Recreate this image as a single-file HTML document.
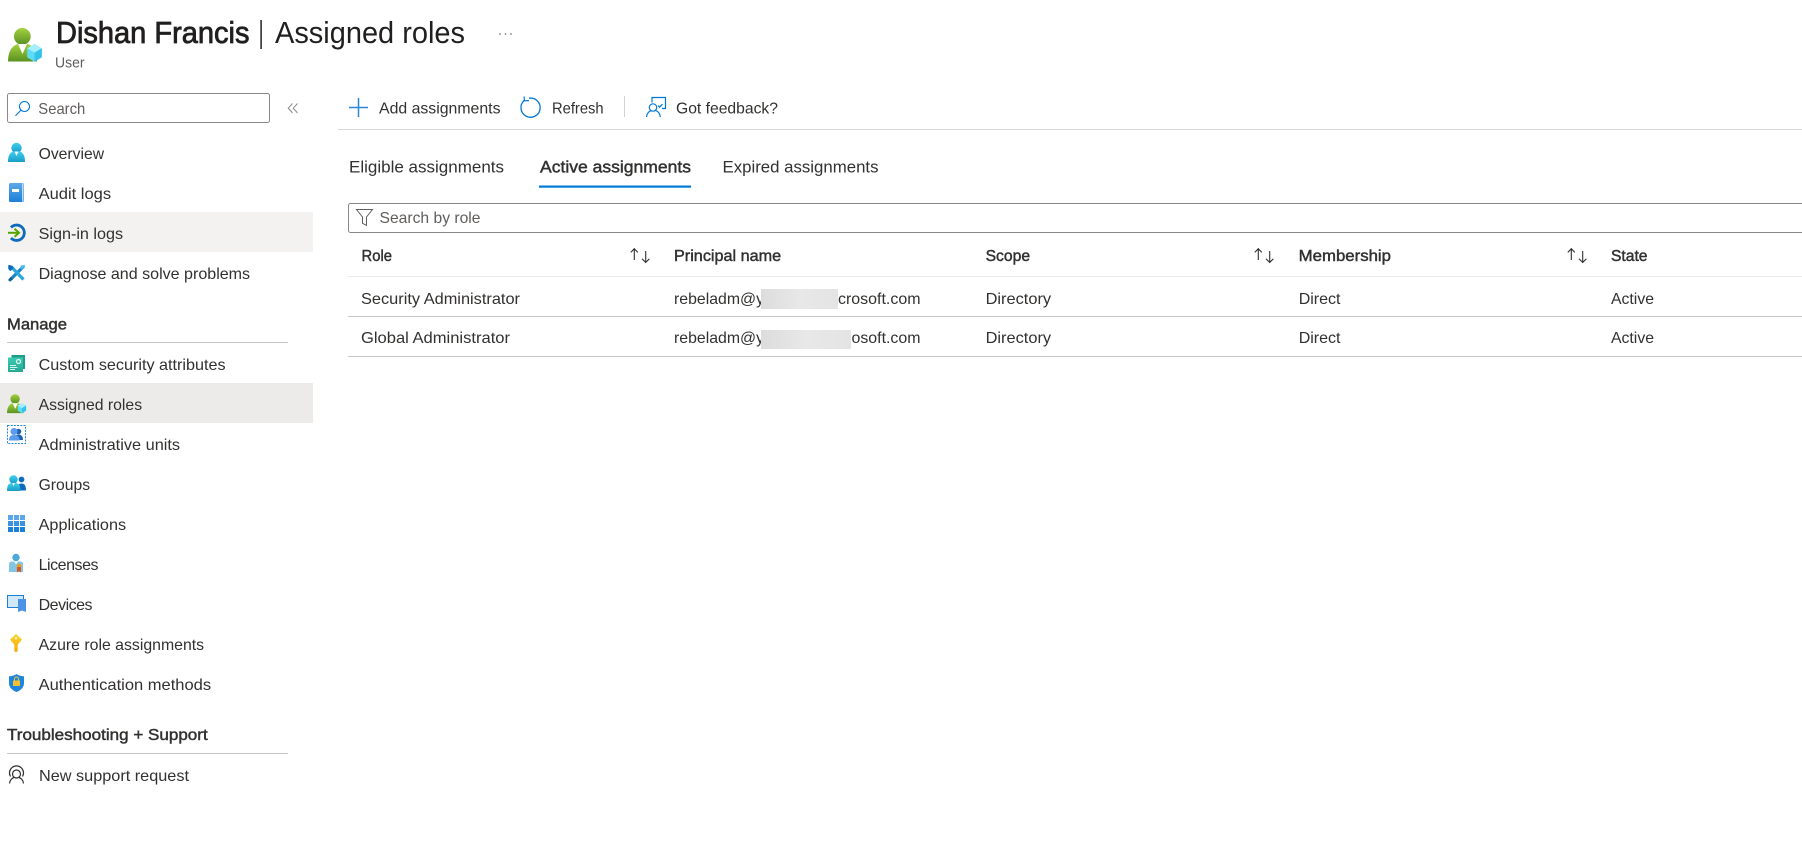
<!DOCTYPE html>
<html lang="en">
<head>
<meta charset="utf-8">
<title>Dishan Francis | Assigned roles</title>
<style>
html,body{margin:0;padding:0;background:#fff;width:1802px;height:865px;overflow:hidden}
svg{display:block;position:absolute;left:0;top:0}
text{font-family:"Liberation Sans",Arial,sans-serif;font-size:16px;fill:#323130}
.semi{stroke:#323130;stroke-width:.45px}
.grey{fill:#605e5c}
</style>
</head>
<body>
<svg width="1802" height="865" viewBox="0 0 1802 865" xmlns="http://www.w3.org/2000/svg">
<defs>
<linearGradient id="gGreen" x1="0" y1="0" x2="0" y2="1"><stop offset="0" stop-color="#a4d13f"/><stop offset="1" stop-color="#5a9222"/></linearGradient>
<linearGradient id="gCyan" x1="0" y1="0" x2="0" y2="1"><stop offset="0" stop-color="#3fd0ee"/><stop offset="1" stop-color="#1a9cc6"/></linearGradient>
<linearGradient id="gBlue" x1="0" y1="0" x2="0" y2="1"><stop offset="0" stop-color="#5ea8ea"/><stop offset="1" stop-color="#1c7fd6"/></linearGradient>
<linearGradient id="gTeal" x1="0" y1="0" x2="0" y2="1"><stop offset="0" stop-color="#3ccbb2"/><stop offset="1" stop-color="#25a893"/></linearGradient>
<linearGradient id="gKey" x1="0" y1="0" x2="0" y2="1"><stop offset="0" stop-color="#ffd230"/><stop offset="1" stop-color="#f5a800"/></linearGradient>
<linearGradient id="gBlur" x1="0" y1="0" x2="1" y2="0"><stop offset="0" stop-color="#dcdcdc"/><stop offset=".5" stop-color="#e8e8e8"/><stop offset="1" stop-color="#e4e4e4"/></linearGradient>
<g id="rolesIcon">
  <circle cx="22.300" cy="36.400" r="8.400" fill="url(#gGreen)"/>
  <path d="M8 61.500c0-9 3-15 9.500-17.500h10C34 46 37 52 37 61.500z" fill="url(#gGreen)"/>
  <path d="M18 44h9l-4.500 10z" fill="#fff"/>
  <path d="M34.500 44l7.300 4.300v9L34.500 61.700l-7.300-4.400v-9z" fill="#5fdcf5"/>
  <path d="M34.500 44l7.300 4.300-7.300 4.300-7.300-4.300z" fill="#a6eefb"/>
  <path d="M34.500 52.600l7.300-4.300v9L34.500 61.700z" fill="#34c3e8"/>
</g>
<g id="sort" fill="none" stroke="#323130" stroke-width="1.100">
  <path d="M634.300 249v11M630.800 252.400l3.500-3.700 3.500 3.700"/>
  <path d="M645.700 251v11.500M642 258.700l3.700 3.800 3.700-3.800"/>
</g>
</defs>

<!-- header -->
<use href="#rolesIcon"/>
<text x="56" y="43" style="font-size:31px;fill:#201f1e;stroke:#201f1e;stroke-width:.8px" textLength="193.500" lengthAdjust="spacingAndGlyphs">Dishan Francis</text>
<rect x="260.300" y="20" width="1.600" height="29" fill="#323130"/>
<text x="275" y="43" style="font-size:31px;fill:#201f1e" textLength="190" lengthAdjust="spacingAndGlyphs">Assigned roles</text>
<circle cx="500" cy="34" r=".8" fill="#605e5c"/><circle cx="505.500" cy="34" r=".8" fill="#605e5c"/><circle cx="511" cy="34" r=".8" fill="#605e5c"/>
<text x="55" y="67.500" class="grey" style="font-size:15px" textLength="29.500" lengthAdjust="spacingAndGlyphs">User</text>

<!-- sidebar search -->
<rect x="7.500" y="93.500" width="262" height="29" rx="2" fill="#fff" stroke="#8a8886"/>
<circle cx="24.500" cy="106.500" r="5" fill="none" stroke="#0078d4" stroke-width="1.100"/>
<path d="M20.800 110.200l-5.300 5.600" fill="none" stroke="#0078d4" stroke-width="1.100"/>
<text x="38.300" y="113.800" class="grey" textLength="47" lengthAdjust="spacingAndGlyphs">Search</text>
<path d="M292.500 103.500l-4.300 4.700 4.300 4.700M297.500 103.500l-4.300 4.700 4.300 4.700" fill="none" stroke="#8a8886" stroke-width="1"/>

<!-- selection backgrounds -->
<rect x="0" y="212" width="313" height="40" fill="#f3f2f1"/>
<rect x="0" y="383" width="313" height="40" fill="#edebe9"/>

<!-- nav text -->
<text x="38.600" y="159" textLength="65.500" lengthAdjust="spacingAndGlyphs">Overview</text>
<text x="38.600" y="199" textLength="72.500" lengthAdjust="spacingAndGlyphs">Audit logs</text>
<text x="38.600" y="239" textLength="84.500" lengthAdjust="spacingAndGlyphs">Sign-in logs</text>
<text x="38.600" y="279" textLength="211.500" lengthAdjust="spacingAndGlyphs">Diagnose and solve problems</text>
<text x="7" y="329.300" class="semi" textLength="60" lengthAdjust="spacingAndGlyphs">Manage</text>
<rect x="7" y="342" width="281" height="1" fill="#c8c6c4"/>
<text x="38.600" y="370" textLength="187" lengthAdjust="spacingAndGlyphs">Custom security attributes</text>
<text x="38.600" y="410" textLength="103.500" lengthAdjust="spacingAndGlyphs">Assigned roles</text>
<text x="38.600" y="450" textLength="141.500" lengthAdjust="spacingAndGlyphs">Administrative units</text>
<text x="38.600" y="490" textLength="51.500" lengthAdjust="spacingAndGlyphs">Groups</text>
<text x="38.600" y="530" textLength="87.500" lengthAdjust="spacingAndGlyphs">Applications</text>
<text x="38.600" y="570" style="letter-spacing:-.46px">Licenses</text>
<text x="38.600" y="610" style="letter-spacing:-.49px">Devices</text>
<text x="38.600" y="650" textLength="165.500" lengthAdjust="spacingAndGlyphs">Azure role assignments</text>
<text x="38.600" y="690" textLength="172.500" lengthAdjust="spacingAndGlyphs">Authentication methods</text>
<text x="7" y="740" class="semi" textLength="200.700" lengthAdjust="spacingAndGlyphs">Troubleshooting + Support</text>
<rect x="7" y="753" width="281" height="1" fill="#c8c6c4"/>
<text x="39" y="781" textLength="150" lengthAdjust="spacingAndGlyphs">New support request</text>

<!-- overview person -->
<circle cx="16.500" cy="148" r="5.200" fill="url(#gCyan)"/>
<path d="M8 162c0-6 1.500-9 5-10.500h7c3.500 1.500 5 4.500 5 10.500z" fill="url(#gCyan)"/>
<path d="M14.500 151.500h4l-2 4.500z" fill="#fff"/>
<!-- audit book -->
<rect x="9" y="183" width="15" height="19" rx="1.500" fill="url(#gBlue)"/>
<rect x="22" y="183.500" width="1.500" height="18" fill="#b9dcf7"/>
<rect x="12" y="189" width="7" height="3" fill="#fff"/>
<!-- sign-in -->
<path d="M11 227.500A7.700 7.700 0 1 1 11 238" fill="none" stroke="#0f6cbd" stroke-width="2.800"/>
<path d="M8 232.800h10.500" stroke="#57a300" stroke-width="2" fill="none"/>
<path d="M14.500 228.800l4.500 4-4.500 4" stroke="#57a300" stroke-width="2" fill="none"/>
<!-- diagnose -->
<path d="M10.500 279.500L23 267" stroke="#1a86c8" stroke-width="3.200" fill="none"/>
<path d="M11 266.500l12.500 13" stroke="#2aa7dd" stroke-width="3.200" fill="none"/>
<path d="M8.500 265c2.500 0 4.500 1 5 3l-2.800 3c-2-.500-3.200-2.500-2.200-6z" fill="#0f6cbd"/>
<path d="M21 265.500l4-.500-.500 3.500-3 1-1.500-1.500z" fill="#45b6e8"/>
<path d="M8 280l2.800-3.300 2.200 2.200-2.800 2.800z" fill="#0f5f96"/>
<!-- custom sec attrs -->
<rect x="11.500" y="355" width="13.500" height="14" fill="#1d9d8a"/>
<rect x="8" y="357.500" width="15" height="14.500" fill="url(#gTeal)"/>
<path d="M10 365.500h6M10 367.500h7.500M10 369.500h5" stroke="#d5f4ee" stroke-width="1" fill="none"/>
<circle cx="18.500" cy="361.500" r="2" fill="none" stroke="#e4faf6" stroke-width="1.200"/>
<!-- assigned roles -->
<use href="#rolesIcon" transform="translate(2.500 378.400) scale(.564)"/>
<!-- administrative units -->
<rect x="7.500" y="425.500" width="18" height="18" fill="none" stroke="#2b88d8" stroke-dasharray="2 1.200"/>
<circle cx="18.500" cy="431.500" r="2.800" fill="#1f5fb5"/>
<path d="M14 440c0-3.500 1.500-5.500 4.500-5.500s4.500 2 4.500 5.500z" fill="#1f5fb5"/>
<circle cx="14" cy="431.500" r="3.500" fill="#5a9bea"/>
<path d="M9 440.500c0-4 1.500-5.500 5-5.500s5.500 1.500 5.500 5.500z" fill="#5a9bea"/>
<!-- groups -->
<circle cx="21.500" cy="479.500" r="2.900" fill="#0f6cbd"/>
<path d="M17 490.500c0-5 1.500-7 4.500-7s4.500 2 4.500 7z" fill="#0f6cbd"/>
<circle cx="13.500" cy="479.500" r="4.200" fill="url(#gCyan)"/>
<path d="M7 491c0-5.500 1.500-7.500 4.500-8h4.500c3 .500 4.500 2.500 4.500 8z" fill="url(#gCyan)"/>
<path d="M12.300 483h2.500l-1.200 3z" fill="#fff"/>
<!-- applications -->
<g>
<rect x="8" y="515" width="5" height="5" fill="#5ba5ea"/><rect x="14" y="515" width="5" height="5" fill="#5ba5ea"/><rect x="20" y="515" width="5" height="5" fill="#5ba5ea"/>
<rect x="8" y="521" width="5" height="5" fill="#3b92e3"/><rect x="14" y="521" width="5" height="5" fill="#3b92e3"/><rect x="20" y="521" width="5" height="5" fill="#3b92e3"/>
<rect x="8" y="527" width="5" height="5" fill="#1b81d8"/><rect x="14" y="527" width="5" height="5" fill="#1b81d8"/><rect x="20" y="527" width="5" height="5" fill="#1b81d8"/>
</g>
<!-- licenses -->
<circle cx="16" cy="557.500" r="3.700" fill="#4fa8d8"/>
<path d="M9 572v-7.500c0-2 1-3 3-3h8c2 0 3 1 3 3v7.500z" fill="#82c6e6"/>
<path d="M14 561.500h4l-2 3z" fill="#fff"/>
<circle cx="19" cy="566" r="2.300" fill="#f09a1a"/>
<path d="M17 567h4v5.500l-2-1.500-2 1.500z" fill="#d9541e"/>
<!-- devices -->
<rect x="7.500" y="595.500" width="16" height="12" fill="#cfe8fa" stroke="#1b7fd6"/>
<path d="M18 599h8v13l-4-1.500-4 1.500z" fill="#4c93e6"/>
<!-- key -->
<path d="M16 634l6 5.500-4.300 5.300v6l-1.700 1.700-1.700-1.700v-6L10 639.500z" fill="url(#gKey)"/>
<circle cx="16" cy="638.300" r="1.300" fill="#fff3bf"/>
<!-- shield -->
<path d="M16.500 674c2 1.500 4.500 2.200 7.500 2.200v7c0 4-3 7-7.500 8.800-4.500-1.800-7.500-4.800-7.500-8.800v-7c3 0 5.500-.700 7.500-2.200z" fill="#1f86dd"/>
<rect x="13" y="680.500" width="7" height="5.500" rx=".6" fill="#f5c12e"/>
<path d="M14.500 680.500v-1.500a2 2 0 0 1 4 0v1.500" fill="none" stroke="#f5c12e" stroke-width="1"/>
<!-- support -->
<g fill="none" stroke="#323130" stroke-width="1.200">
<circle cx="16.500" cy="774" r="4"/>
<path d="M10.500 776.500a7 7 0 1 1 12 0"/>
<path d="M9.500 783.500c.300-3.500 2.700-5.500 4.500-6M23.500 783.500c-.300-3.500-2.700-5.500-4.500-6"/>
</g>

<!-- toolbar -->
<path d="M358.500 98v19M349 107.500h19" stroke="#2b88d8" stroke-width="1.500" fill="none"/>
<text x="379" y="113.700" textLength="121.500" lengthAdjust="spacingAndGlyphs">Add assignments</text>
<path d="M529 98.200A9.600 9.600 0 1 1 524.300 100.400" fill="none" stroke="#0078d4" stroke-width="1.300"/>
<path d="M524 96.500l.500 4.300 4.500-.200" fill="none" stroke="#0078d4" stroke-width="1.200"/>
<text x="552" y="113.700" textLength="51.600" lengthAdjust="spacingAndGlyphs">Refresh</text>
<rect x="624" y="96" width="1" height="21" fill="#d2d0ce"/>
<g fill="none" stroke="#0078d4" stroke-width="1.200">
<path d="M652 102.500v-5h13.500v11h-3.500"/>
<path d="M658.200 105.500l1.300 1.700 3-3"/>
<circle cx="653" cy="107.500" r="3.700"/>
<path d="M646.500 117c.300-3.500 2.500-6 5-6.300M660.300 117c-.300-3.500-2.300-6-4.800-6.300"/>
</g>
<text x="676" y="113.700" textLength="102" lengthAdjust="spacingAndGlyphs">Got feedback?</text>
<rect x="338" y="129" width="1464" height="1" fill="#d6d6d6"/>

<!-- tabs -->
<text x="349" y="172.700" style="font-size:17px" textLength="155" lengthAdjust="spacingAndGlyphs">Eligible assignments</text>
<text x="540" y="172.700" class="semi" style="font-size:17px" textLength="151" lengthAdjust="spacingAndGlyphs">Active assignments</text>
<text x="722.500" y="172.700" style="font-size:17px" textLength="156" lengthAdjust="spacingAndGlyphs">Expired assignments</text>
<rect x="539" y="185.500" width="152" height="2.200" fill="#0078d4"/>

<!-- filter -->
<rect x="348.500" y="203.500" width="1500" height="29" rx="2" fill="#fff" stroke="#8a8886"/>
<path d="M356.500 209.500h16l-6 7.500v8.300l-4-2v-6.300z" fill="none" stroke="#605e5c" stroke-width="1"/>
<text x="379.500" y="222.800" class="grey" textLength="101" lengthAdjust="spacingAndGlyphs">Search by role</text>

<!-- table head -->
<text x="361.500" y="261" class="semi" textLength="30.500" lengthAdjust="spacingAndGlyphs">Role</text>
<use href="#sort"/>
<text x="674" y="261" class="semi" textLength="107.200" lengthAdjust="spacingAndGlyphs">Principal name</text>
<text x="985.600" y="261" class="semi" textLength="44.500" lengthAdjust="spacingAndGlyphs">Scope</text>
<use href="#sort" transform="translate(624 0)"/>
<text x="1298.700" y="261" class="semi" textLength="92.300" lengthAdjust="spacingAndGlyphs">Membership</text>
<use href="#sort" transform="translate(937 0)"/>
<text x="1611" y="261" class="semi" textLength="36.500" lengthAdjust="spacingAndGlyphs">State</text>
<rect x="348" y="276" width="1454" height="1" fill="#edebe9"/>

<!-- row 1 -->
<text x="361" y="304" textLength="159" lengthAdjust="spacingAndGlyphs">Security Administrator</text>
<text x="674" y="304" textLength="90" lengthAdjust="spacingAndGlyphs">rebeladm@y</text>
<rect x="761" y="289" width="77" height="20" fill="url(#gBlur)"/>
<text x="838" y="304" textLength="82.500" lengthAdjust="spacingAndGlyphs">crosoft.com</text>
<text x="985.600" y="304" textLength="65.500" lengthAdjust="spacingAndGlyphs">Directory</text>
<text x="1298.700" y="304" textLength="41.800" lengthAdjust="spacingAndGlyphs">Direct</text>
<text x="1611" y="304" textLength="43" lengthAdjust="spacingAndGlyphs">Active</text>
<rect x="348" y="316" width="1454" height="1" fill="#c8c6c4"/>

<!-- row 2 -->
<text x="361" y="343" textLength="149" lengthAdjust="spacingAndGlyphs">Global Administrator</text>
<text x="674" y="343" textLength="90" lengthAdjust="spacingAndGlyphs">rebeladm@y</text>
<rect x="761" y="330" width="90" height="19" fill="url(#gBlur)"/>
<text x="851.500" y="343" textLength="69" lengthAdjust="spacingAndGlyphs">osoft.com</text>
<text x="985.600" y="343" textLength="65.500" lengthAdjust="spacingAndGlyphs">Directory</text>
<text x="1298.700" y="343" textLength="41.800" lengthAdjust="spacingAndGlyphs">Direct</text>
<text x="1611" y="343" textLength="43" lengthAdjust="spacingAndGlyphs">Active</text>
<rect x="348" y="356" width="1454" height="1" fill="#c8c6c4"/>
</svg>
</body>
</html>
